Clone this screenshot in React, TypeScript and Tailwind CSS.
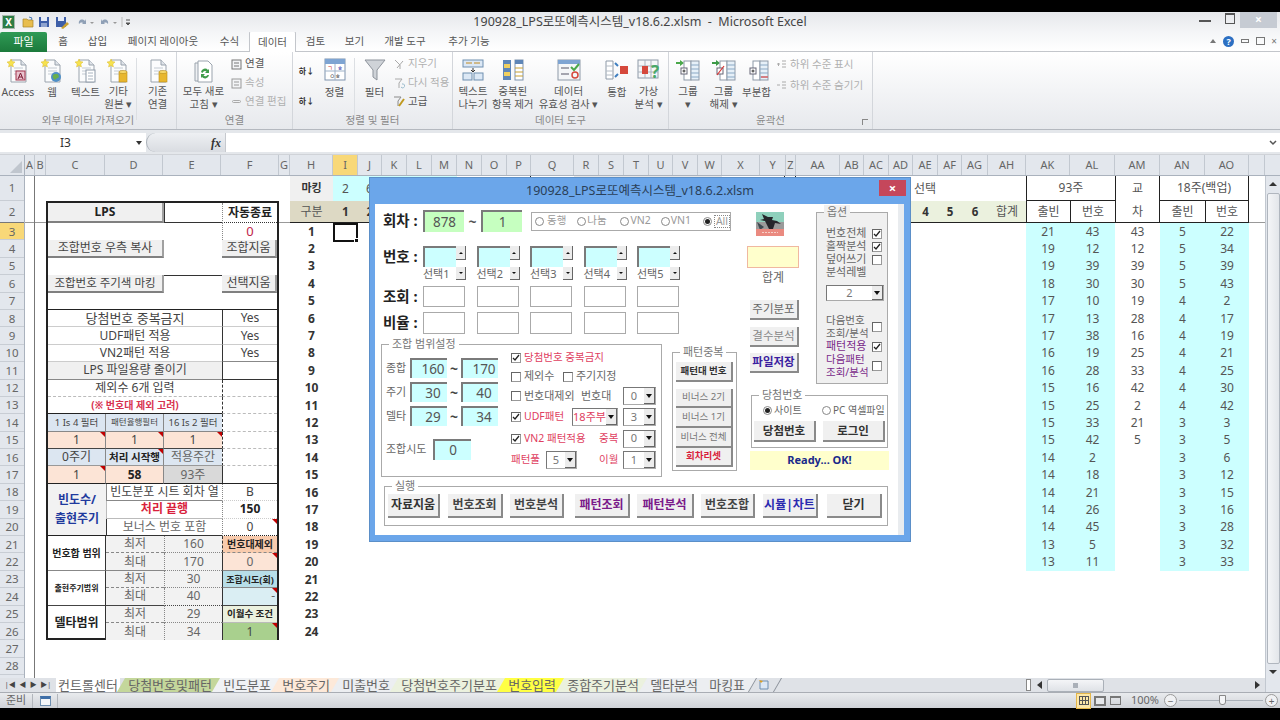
import React from 'react';

const sheetCols = 'grid-cols-[10px_11px_59px_58px_58px_58px_11px_43px_25px_24px_25px_25px_25px_25px_25px_24px_43px_25px_25px_25px_24px_25px_24px_38px_26px_10px_44px_24px_25px_24px_25px_24px_26px_38px_44px_45px_45px_45px_44px_16px]';
const colNames = ['A', 'B', 'C', 'D', 'E', 'F', 'G', 'H', 'I', 'J', 'K', 'L', 'M', 'N', 'O', 'P', 'Q', 'R', 'S', 'T', 'U', 'V', 'W', 'X', 'Y', 'Z', 'AA', 'AB', 'AC', 'AD', 'AE', 'AF', 'AG', 'AH', 'AK', 'AL', 'AM', 'AN', 'AO', ''];

const rightData: (string | number)[][] = [
  [21, 43, 43, 5, 22], [19, 12, 12, 5, 34], [19, 39, 39, 5, 39], [18, 30, 30, 5, 43], [17, 10, 19, 4, 2],
  [17, 13, 28, 4, 17], [17, 38, 16, 4, 19], [16, 19, 25, 4, 21], [16, 28, 33, 4, 25], [15, 16, 42, 4, 30],
  [15, 25, 2, 4, 42], [15, 33, 21, 3, 3], [15, 42, 5, 3, 5], [14, 2, '', 3, 6], [14, 18, '', 3, 12],
  [14, 21, '', 3, 15], [14, 26, '', 3, 16], [14, 45, '', 3, 28], [13, 5, '', 3, 32], [13, 11, '', 3, 33],
];

function Doc({ children, star = true }: { children?: React.ReactNode; star?: boolean }) {
  return (
    <svg width="24" height="26" viewBox="0 0 24 26">
      <path d="M5 2h10l5 5v17H5z" fill="#fbfcfd" stroke="#9aa3ad" />
      <path d="M15 2v5h5" fill="#dfe4ea" stroke="#9aa3ad" />
      <path d="M8 10h9M8 13h9M8 16h9" stroke="#c3cad2" />
      {star && <path d="M5 1l1.2 2.6L9 4 6.8 6l.6 3L5 7.5 2.600 9l.6-3L1 4l2.800-.4z" fill="#f6e24e" stroke="#d9b92c" strokeWidth=".5" />}
      {children}
    </svg>
  );
}

function Cylinder() {
  return (
    <g>
      <rect x="13" y="14" width="8" height="10" fill="#e8b72f" stroke="#b98c18" strokeWidth=".6" />
      <ellipse cx="17" cy="14" rx="4" ry="1.6" fill="#f5d76a" stroke="#b98c18" strokeWidth=".6" />
    </g>
  );
}

function SheetIcon({ kind }: { kind: 'group' | 'ungroup' | 'subtotal' }) {
  return (
    <svg width="26" height="24" viewBox="0 0 26 24">
      {kind !== 'subtotal' && <path d="M1 4h4V2l4 3-4 3V6H1z" fill={kind === 'group' ? '#4aa84a' : '#3d9a48'} />}
      <rect x="9" y="3" width="7" height="19" fill="#fff" stroke="#8e9aa8" />
      <rect x="16" y="3" width="8" height="19" fill="#e6f0f8" stroke="#8e9aa8" />
      <path d="M16 7h8M16 11h8M16 15h8M16 19h8" stroke="#8aa8c4" />
      <rect x="6" y="10" width="6" height="6" fill="#fff" stroke="#667" />
      {kind === 'ungroup' ? <path d="M6 17L13 8" stroke="#d33" strokeWidth="1.200" /> : <path d="M7.500 13h3M9 11.500v3" stroke="#333" />}
      {kind === 'subtotal' && <path d="M17 19h7" stroke="#d66" strokeWidth="1.500" />}
    </svg>
  );
}

function RibbonItem({ icon, lines, className = '' }: { icon: React.ReactNode; lines: string[]; className?: string }) {
  return (
    <div className={`flex flex-col items-center ${className}`}>
      <div className="h-[28px] flex items-start justify-center">{icon}</div>
      {lines.map((l, i) => (
        <div key={i} className="h-[13px] leading-[13px] text-[10.500px] text-[#555] whitespace-nowrap">{l}</div>
      ))}
    </div>
  );
}

function RibbonGroup({ label, className, children }: { label: string; className: string; children: React.ReactNode }) {
  return (
    <div className={`flex flex-col border-r border-[#d3d6db] ${className}`}>
      <div className="flex-1 flex pt-[6px] min-h-0">{children}</div>
      <div className="h-[18px] leading-[18px] text-center text-[10.500px] text-[#888]">{label}</div>
    </div>
  );
}

function SmallCmd({ icon, text, on = false, height = 'h-[19px]' }: { icon: React.ReactNode; text: string; on?: boolean; height?: string }) {
  return (
    <div className={`flex items-center gap-[3px] ${height} text-[10.500px] whitespace-nowrap ${on ? 'text-[#555]' : 'text-[#b0b0b0]'}`}>
      <span className="w-[12px] flex justify-center">{icon}</span>
      {text}
    </div>
  );
}

function Tiny({ color = '#999' }: { color?: string }) {
  return (
    <svg width="11" height="11" viewBox="0 0 11 11">
      <rect x="1" y="1" width="9" height="9" fill="#f3f4f6" stroke={color} />
      <path d="M3 4h5M3 7h5" stroke={color} />
    </svg>
  );
}

function Ribbon() {
  return (
    <div className="h-[78px] flex bg-gradient-to-b from-[#ffffff] to-[#e7e9ed] border-b border-[#b4b8bf]">
      <RibbonGroup label="외부 데이터 가져오기" className="w-[177px]">
        <RibbonItem className="w-[36px]" lines={['Access']} icon={<Doc><rect x="10" y="13" width="9" height="9" fill="#e9c4cf" stroke="#a3324c" /><path d="M12 21l2.500-6 2.500 6M13 19h3" stroke="#7d1a34" fill="none" /></Doc>} />
        <RibbonItem className="w-[33px]" lines={['웹']} icon={<Doc><circle cx="16" cy="19" r="5" fill="#4f8fc6" /><path d="M13 17c2-2 4 0 5-1l1 3c-2 2-3 1-4 3-1-1-3-2-2-5z" fill="#6ab04c" /></Doc>} />
        <RibbonItem className="w-[34px]" lines={['텍스트']} icon={<Doc><rect x="12" y="12" width="9" height="12" fill="#fff" stroke="#8e9aa8" /><path d="M14 15h5M14 18h5M14 21h5" stroke="#a9b4c0" /></Doc>} />
        <RibbonItem className="w-[32px]" lines={['기타', '원본 ▾']} icon={<Doc><Cylinder /></Doc>} />
        <div className="w-px h-[62px] bg-[#dcdfe3] mx-[2px]" />
        <RibbonItem className="w-[37px]" lines={['기존', '연결']} icon={<Doc star={false}><Cylinder /></Doc>} />
      </RibbonGroup>
      <RibbonGroup label="연결" className="w-[116px]">
        <RibbonItem className="w-[53px]" lines={['모두 새로', '고침 ▾']} icon={
          <svg width="24" height="26" viewBox="0 0 24 26">
            <path d="M3 5h10v18H3z" fill="#eef0f3" stroke="#9aa3ad" />
            <path d="M6 3h10l4 4v17H6z" fill="#fff" stroke="#9aa3ad" />
            <path d="M9 14a4 4 0 017-2l1-1v4h-4l1.500-1.500A2.500 2.500 0 0010.500 15zM17 17a4 4 0 01-7 2l-1 1v-4h4l-1.500 1.500a2.500 2.500 0 004-.500z" fill="#3f9c4a" />
          </svg>
        } />
        <div className="flex flex-col -mt-[3px]">
          <SmallCmd on text="연결" icon={<Tiny color="#777" />} />
          <SmallCmd text="속성" icon={<Tiny />} />
          <SmallCmd text="연결 편집" icon={<span className="w-[9px] h-[3px] border border-[#aaa] rounded-full" />} />
        </div>
      </RibbonGroup>
      <RibbonGroup label="정렬 및 필터" className="w-[160px]">
        <div className="w-[23px] ml-[2px] flex flex-col items-center text-[8px] leading-[10px] text-[#333] font-bold">
          <div className="mt-[8px] whitespace-nowrap">하↓</div>
          <div className="mt-[20px] whitespace-nowrap">하↓</div>
        </div>
        <RibbonItem className="w-[33px]" lines={['정렬']} icon={
          <svg width="22" height="24" viewBox="0 0 22 24">
            <rect x="1" y="1" width="20" height="21" fill="#fff" stroke="#7f93ad" />
            <rect x="1" y="1" width="20" height="5" fill="#7ea4d2" />
            <path d="M1 13h20M11 6v16" stroke="#9fb2c8" />
            <text x="6" y="12" fontSize="6" fill="#c33" textAnchor="middle">ㄱ</text>
            <text x="16" y="12" fontSize="6" fill="#33a" textAnchor="middle">ㅎ</text>
            <text x="11" y="20" fontSize="6" fill="#444" textAnchor="middle">ㅇㅎ</text>
          </svg>
        } />
        <div className="w-px h-[62px] bg-[#dcdfe3] mx-[3px]" />
        <RibbonItem className="w-[33px]" lines={['필터']} icon={
          <svg width="24" height="24" viewBox="0 0 24 24">
            <path d="M2 2h20l-8 10v10l-4-3v-7z" fill="#cfd3d8" stroke="#8d939b" />
          </svg>
        } />
        <div className="flex flex-col -mt-[3px] ml-[2px]">
          <SmallCmd text="지우기" icon={<svg width="11" height="11" viewBox="0 0 11 11"><path d="M1 1l5 5v4M9 2L3 9" stroke="#aaa" fill="none" /></svg>} />
          <SmallCmd text="다시 적용" icon={<svg width="11" height="11" viewBox="0 0 11 11"><path d="M1 1h7L5 5v5" stroke="#aaa" fill="none" /><path d="M8 6a2 2 0 11-1 3" stroke="#9bc" fill="none" /></svg>} />
          <SmallCmd on text="고급" icon={<svg width="12" height="11" viewBox="0 0 12 11"><path d="M1 1h7L5 5v5" stroke="#8a8a8a" fill="none" /><path d="M6 10l5-7" stroke="#c09a20" strokeWidth="2" /></svg>} />
        </div>
      </RibbonGroup>
      <RibbonGroup label="데이터 도구" className="w-[216px]">
        <RibbonItem className="w-[40px]" lines={['텍스트', '나누기']} icon={
          <svg width="24" height="24" viewBox="0 0 24 24">
            <rect x="2" y="2" width="20" height="7" fill="#dce8f5" stroke="#6f8fb0" />
            <path d="M5 5h6M13 5h6" stroke="#c08a20" />
            <path d="M12 10v4M10 12l2 2 2-2" stroke="#333" fill="none" />
            <rect x="2" y="15" width="9" height="7" fill="#dce8f5" stroke="#6f8fb0" />
            <rect x="13" y="15" width="9" height="7" fill="#dce8f5" stroke="#6f8fb0" />
          </svg>
        } />
        <RibbonItem className="w-[40px]" lines={['중복된', '항목 제거']} icon={
          <svg width="24" height="24" viewBox="0 0 24 24">
            <rect x="2" y="2" width="8" height="20" fill="#5e86b8" />
            <rect x="3" y="6" width="6" height="4" fill="#f0d060" />
            <rect x="3" y="14" width="6" height="4" fill="#f0d060" />
            <rect x="14" y="2" width="8" height="20" fill="#fff" stroke="#7f93ad" />
            <rect x="14" y="2" width="8" height="4" fill="#5e86b8" />
            <path d="M14 10h8M14 14h8M14 18h8" stroke="#c9a030" />
          </svg>
        } />
        <RibbonItem className="w-[72px]" lines={['데이터', '유효성 검사 ▾']} icon={
          <svg width="26" height="24" viewBox="0 0 26 24">
            <rect x="2" y="2" width="22" height="20" fill="#f4f6f8" stroke="#8e9aa8" />
            <rect x="2" y="2" width="22" height="4" fill="#7ea4d2" />
            <path d="M5 10h8M5 16h8" stroke="#556" />
            <path d="M15 9l3 3 5-6" stroke="#4aa84a" strokeWidth="2" fill="none" />
            <circle cx="19" cy="17" r="3" fill="none" stroke="#d5483c" strokeWidth="1.500" />
          </svg>
        } />
        <RibbonItem className="w-[25px]" lines={['통합']} icon={
          <svg width="24" height="24" viewBox="0 0 24 24">
            <path d="M1 3h7v18H1z" fill="#fff" stroke="#8e9aa8" />
            <path d="M1 8h7M1 13h7M1 17h7" stroke="#b4bcc6" />
            <rect x="15" y="8" width="8" height="8" fill="#d5483c" />
            <path d="M10 5l3 3M10 19l3-3" stroke="#3f7fc0" strokeWidth="2" />
          </svg>
        } />
        <RibbonItem className="w-[39px]" lines={['가상', '분석 ▾']} icon={
          <svg width="24" height="24" viewBox="0 0 24 24">
            <rect x="1" y="2" width="20" height="18" fill="#f4f6f8" stroke="#8e9aa8" />
            <path d="M1 8h20M1 14h20M8 2v18M14 2v18" stroke="#a9b2bd" />
            <rect x="5" y="8" width="6" height="8" fill="#d5483c" />
            <text x="18" y="20" fontSize="17" fontWeight="700" fill="#48a868" textAnchor="middle">?</text>
          </svg>
        } />
      </RibbonGroup>
      <RibbonGroup label="윤곽선" className="w-[204px] relative">
        <RibbonItem className="w-[38px]" lines={['그룹', '▾']} icon={<SheetIcon kind="group" />} />
        <RibbonItem className="w-[33px]" lines={['그룹', '해제 ▾']} icon={<SheetIcon kind="ungroup" />} />
        <RibbonItem className="w-[33px]" lines={['부분합']} icon={<SheetIcon kind="subtotal" />} />
        <div className="flex flex-col -mt-[4px] ml-[2px]">
          <SmallCmd height="h-[21px]" text="하위 수준 표시" icon={<svg width="11" height="9" viewBox="0 0 11 9"><path d="M1 4h3M2.500 3v3" stroke="#aaa" /><path d="M6 1h4M6 4h4M6 7h4" stroke="#aaa" /></svg>} />
          <SmallCmd height="h-[21px]" text="하위 수준 숨기기" icon={<svg width="11" height="9" viewBox="0 0 11 9"><path d="M1 4h3" stroke="#aaa" /><path d="M6 1h4M6 4h4M6 7h4" stroke="#aaa" /></svg>} />
        </div>
        <span className="absolute right-[4px] bottom-[4px] w-[6px] h-[6px] border-l border-t border-[#888]" />
      </RibbonGroup>
      <div className="flex-1" />
    </div>
  );
}

function TitleBar() {
  return (
    <div className="h-[20px] relative flex items-center pl-[2px] bg-gradient-to-b from-[#e6e8eb] to-[#f4f5f7]">
      <div className="w-[13px] h-[14px] bg-[#2d7d46] border border-[#a9b8ae] flex items-center justify-center text-white text-[10px] font-bold leading-none">X</div>
      <svg className="ml-[6px]" width="110" height="14" viewBox="0 0 110 14">
        <path d="M2 4h4l1 1h5v7H2z" fill="#e8bd4e" stroke="#a8842a" strokeWidth=".7" />
        <path d="M8 2l3 1-1 2" stroke="#4a7ab8" fill="none" />
        <rect x="18" y="2" width="10" height="10" fill="#3e5fa8" /><rect x="20" y="2" width="6" height="4" fill="#e6ecf7" /><rect x="20" y="8" width="6" height="4" fill="#8fa4cf" />
        <rect x="35" y="2" width="10" height="10" fill="#3e5fa8" /><rect x="37" y="2" width="6" height="4" fill="#e6ecf7" /><path d="M40 13l6-6 2 2-6 5z" fill="#c9a030" />
        <path d="M58 9c-1-4 3-6 6-3l1-2v5h-4l1-1c-2-1-3 0-4 1z" fill="#8fa0b6" /><path d="M69 7h4l-2 2z" fill="#999" />
        <path d="M87 9c1-4-3-6-6-3l-1-2v5h4l-1-1c2-1 3 0 4 1z" fill="#8fa0b6" /><path d="M92 7h4l-2 2z" fill="#999" />
        <path d="M101 2v10" stroke="#bbb" /><path d="M105 8h4l-2 2zM105 5h4" stroke="#555" fill="#555" />
      </svg>
      <div className="absolute left-0 right-0 text-center text-[12.500px] text-[#444] pointer-events-none">190928_LPS로또예측시스템_v18.6.2.xlsm&nbsp; -&nbsp; Microsoft Excel</div>
      <div className="ml-auto flex items-start h-full">
        <div className="w-[12px] mr-[14px] border-b-2 border-[#555] h-[10px]" />
        <div className="w-[10px] h-[11px] mr-[5px] border border-[#555] border-t-2 mt-[1px]" />
        <div className="w-[37px] h-[16px] ml-[0px] mr-[3px] bg-[#c6cbd3] text-white text-center text-[12px] font-bold leading-[15px]">×</div>
      </div>
    </div>
  );
}

function TabStrip() {
  const tabs: [string, string][] = [['홈', 'w-[32px]'], ['삽입', 'w-[37px]'], ['페이지 레이아웃', 'w-[94px]'], ['수식', 'w-[39px]']];
  const tabs2: [string, string][] = [['검토', 'w-[39px]'], ['보기', 'w-[39px]'], ['개발 도구', 'w-[62px]'], ['추가 기능', 'w-[66px]']];
  return (
    <div className="h-[20px] flex items-end bg-gradient-to-b from-[#f4f5f7] to-[#ffffff] border-b border-[#c3c6cb]">
      <div className="w-[47px] h-[20px] mb-[-1px] bg-gradient-to-b from-[#2f9a55] to-[#1c7a3c] rounded-t-[2px] text-white text-[11px] leading-[20px] text-center">파일</div>
      {tabs.map(([t, w]) => (
        <div key={t} className={`${w} h-[20px] leading-[20px] text-center text-[10.500px] text-[#555]`}>{t}</div>
      ))}
      <div className="w-[47px] h-[21px] mb-[-1px] bg-white border border-b-0 border-[#c3c6cb] rounded-t-[2px] leading-[20px] text-center text-[10.500px] text-[#555]">데이터</div>
      {tabs2.map(([t, w]) => (
        <div key={t} className={`${w} h-[20px] leading-[20px] text-center text-[10.500px] text-[#555]`}>{t}</div>
      ))}
      <div className="ml-auto flex items-center gap-[5px] h-[20px] pr-[3px]">
        <span className="w-0 h-0 border-x-[3px] border-x-transparent border-b-[4px] border-b-[#777] mr-[2px]" />
        <span className="w-[11px] h-[11px] rounded-full bg-[#2c6fc2] text-white text-[9px] leading-[11px] text-center font-bold">?</span>
        <span className="w-[8px] h-[4px] border border-[#777] ml-[2px]" />
        <span className="w-[9px] h-[8px] border border-[#777] ml-[2px]" />
        <span className="text-[10px] text-[#777] leading-none ml-[1px]">×</span>
      </div>
    </div>
  );
}

function FormulaBar() {
  return (
    <div className="h-[25px] flex pt-[3px] pb-[2px] bg-[#e4e7eb] border-b border-[#d0d3d8]">
      <div className="w-[146px] bg-white flex items-center relative text-[12px] text-[#333]">
        <span className="ml-[60px]">I3</span>
        <span className="absolute right-[4px] w-0 h-0 border-x-[3px] border-x-transparent border-t-[4px] border-t-[#333]" />
      </div>
      <div className="w-[79px] flex items-center pl-[2px] rounded-l-[10px] bg-gradient-to-b from-[#eef0f3] to-[#d9dce1] border-l border-[#aab0b8]">
        <span className="ml-auto mr-[4px] text-[12px] italic font-bold text-[#333] font-['Liberation_Serif',serif]">fx</span>
      </div>
      <div className="flex-1 bg-white border-l border-[#c6c9ce] flex justify-end items-center pr-[3px]">
        <svg width="8" height="6" viewBox="0 0 8 6"><path d="M1 1l3 3 3-3" stroke="#555" strokeWidth="1.500" fill="none" /></svg>
      </div>
    </div>
  );
}

function ColHeader() {
  return (
    <div className="h-[21px] flex bg-[#e3e7ed] border-b border-[#aab2bd]">
      <div className="w-[25px] relative border-r border-[#aab2bd] overflow-hidden">
        <span className="absolute right-[2px] bottom-[2px] w-0 h-0 border-l-[12px] border-l-transparent border-b-[12px] border-b-[#c0c6ce]" />
      </div>
      <div className={`grid ${sheetCols} flex-1`}>
        {colNames.map((c, i) => (
          <div key={i} className={`flex items-center justify-center border-r border-[#c2c8d0] text-[11px] text-[#666] ${c === 'I' ? 'bg-[#f8d878]' : ''}`}>{c}</div>
        ))}
      </div>
    </div>
  );
}

function RowHeaders() {
  const rows = Array.from({ length: 28 }, (_, i) => i + 1);
  return (
    <div className="w-[25px] flex flex-col bg-[#e3e7ed] border-r border-[#aab2bd]">
      {rows.map((r) => (
        <div
          key={r}
          className={`flex items-center justify-center text-[11.5px] text-[#666] border-b border-[#c8cdd4] ${r === 1 ? 'h-[25px]' : r === 2 ? 'h-[22px] border-b-[#777]' : 'h-[17.4px]'} ${r === 3 ? 'bg-[#f8d878]' : ''}`}
        >
          {r}
        </div>
      ))}
      <div className="flex-1" />
    </div>
  );
}

function Tri() {
  return <span className="absolute right-0 top-0 w-0 h-0 border-l-[5px] border-l-transparent border-t-[5px] border-t-[#c00000]" />;
}

const cell = 'relative flex items-center justify-center whitespace-nowrap overflow-hidden leading-none';
const btnCell = 'bg-[#f0f0f0] border-b-2 border-r-2 border-b-[#808080] border-r-[#a0a0a0]';

function LeftTable() {
  return (
    <div className="mt-[25px] w-[233px] h-[439px] border-2 border-[#222] bg-white text-[12px] text-[#444] grid grid-cols-[58px_58px_58px_55px] grid-rows-[20px_repeat(24,17.4px)]">
      {/* row 2 */}
      <div className={`${cell} ${btnCell} col-span-2 font-bold text-[#222]`}>LPS</div>
      <div className={`${cell} border-l border-[#333] border-b border-b-[#333]`} />
      <div className={`${cell} font-bold text-[#222] border-l border-dotted border-[#888] border-b border-b-[#333]`}>자동종료</div>
      {/* row 3-7 */}
      <div className={`${cell} col-span-3`} />
      <div className={`${cell} border-l border-dotted border-[#888] text-[#c0254a] text-[13px]`}>0</div>
      <div className={`${cell} ${btnCell} col-span-2`}>조합번호 우측 복사</div>
      <div className={`${cell}`} />
      <div className={`${cell} ${btnCell}`}>조합지움</div>
      <div className={`${cell} col-span-4`} />
      <div className={`${cell} ${btnCell} col-span-2 text-[11.500px]`}>조합번호 주기색 마킹</div>
      <div className={`${cell} border-t border-[#333]`} />
      <div className={`${cell} ${btnCell}`}>선택지움</div>
      <div className={`${cell} col-span-4 border-b border-[#222]`} />
      {/* row 8-10 */}
      <div className={`${cell} col-span-3 text-[13px] border-b border-[#ccc]`}>당첨번호 중복금지</div>
      <div className={`${cell} border-l border-[#333] border-b border-b-[#ccc]`}>Yes</div>
      <div className={`${cell} col-span-3 border-b border-[#ccc]`}>UDF패턴 적용</div>
      <div className={`${cell} border-l border-[#333] border-b border-b-[#ccc]`}>Yes</div>
      <div className={`${cell} col-span-3 border-b border-[#ccc]`}>VN2패턴 적용</div>
      <div className={`${cell} border-l border-[#333] border-b border-b-[#888]`}>Yes</div>
      {/* row 11-13 */}
      <div className={`${cell} col-span-3 bg-[#f0f0f0] border-b border-[#888]`}>LPS 파일용량 줄이기</div>
      <div className={`${cell} border-l border-[#333] border-b border-b-[#333]`} />
      <div className={`${cell} col-span-3 border-b border-dashed border-[#bbb]`}>제외수 6개 입력</div>
      <div className={`${cell} border-l border-[#333] border-b border-dashed border-b-[#bbb]`} />
      <div className={`${cell} col-span-3 font-bold text-[#d8324f] text-[10px] border-b border-[#222]`}>(※ 번호대 제외 고려)</div>
      <div className={`${cell} border-l border-[#333] border-b border-dashed border-b-[#bbb]`} />
      {/* row 14-17 */}
      <div className={`${cell} bg-[#dce6f1] text-[9.500px] border-b border-r border-[#888]`}>1 Is 4 필터</div>
      <div className={`${cell} bg-[#dce6f1] text-[8.500px] border-b border-r border-[#888]`}>패턴율행필터</div>
      <div className={`${cell} bg-[#dce6f1] text-[9.500px] border-b border-[#888]`}>16 Is 2 필터</div>
      <div className={`${cell} border-l border-[#333] border-b border-dashed border-b-[#bbb]`} />
      <div className={`${cell} bg-[#fce4d6] border-r border-[#888] border-b border-b-[#444]`}>1<Tri /></div>
      <div className={`${cell} bg-[#fce4d6] border-r border-[#888] border-b border-b-[#444]`}>1<Tri /></div>
      <div className={`${cell} bg-[#fce4d6] border-b border-[#444]`}>1<Tri /></div>
      <div className={`${cell} border-l border-[#333] border-b border-dashed border-b-[#bbb]`} />
      <div className={`${cell} bg-[#dce6f1] border-r border-[#888] border-b border-b-[#999]`}>0주기</div>
      <div className={`${cell} bg-[#dce6f1] font-bold text-[10.500px] text-[#222] border-r border-[#888] border-b border-b-[#999]`}>처리 시작행<Tri /></div>
      <div className={`${cell} bg-[#dce6f1] text-[#666] border-b border-[#999]`}>적용주간</div>
      <div className={`${cell} border-l border-[#333] border-b border-dashed border-b-[#bbb]`} />
      <div className={`${cell} bg-[#fce4d6] border-r border-[#888] border-b border-b-[#222]`}>1<Tri /></div>
      <div className={`${cell} bg-[#fce4d6] font-bold text-[#222] border-r border-[#888] border-b border-b-[#222]`}>58</div>
      <div className={`${cell} bg-[#d9d9d9] text-[#666] border-b border-[#222]`}>93주</div>
      <div className={`${cell} border-l border-[#333] border-b border-b-[#222]`} />
      {/* row 18-20 */}
      <div className={`${cell} row-span-3 flex-col bg-[#f2f2f2] font-bold text-[#1f3a9e] border-b border-[#222]`}>
        <div className="leading-[19px]">빈도수/</div>
        <div className="leading-[19px]">출현주기</div>
      </div>
      <div className={`${cell} col-span-2 border-l border-[#333] border-b border-[#888]`}>빈도분포 시트 회차 열</div>
      <div className={`${cell} border-l border-dotted border-[#888] border-b border-b-[#ccc]`}>B</div>
      <div className={`${cell} col-span-2 border-l border-[#333] border-b border-[#bbb] font-bold text-[#d81f3c]`}>처리 끝행</div>
      <div className={`${cell} border-l border-dotted border-[#888] border-b border-b-[#ccc] font-bold text-[#222]`}>150</div>
      <div className={`${cell} col-span-2 border-l border-[#333] border-b border-[#222] text-[#666]`}>보너스 번호 포함</div>
      <div className={`${cell} border-l border-dotted border-[#888] border-b border-b-[#222]`}>0<Tri /></div>
      {/* row 21-22 */}
      <div className={`${cell} row-span-2 font-bold text-[10px] text-[#222] border-r border-[#333] border-b border-b-[#888]`}>번호합 범위</div>
      <div className={`${cell} bg-[#f2f2f2] text-[#666] border-b border-dashed border-b-[#888]`}>최저</div>
      <div className={`${cell} bg-[#f2f2f2] text-[#666] border-l border-dotted border-l-[#888] border-b border-dashed border-b-[#888]`}>160</div>
      <div className={`${cell} bg-[#f8cbad] font-bold text-[10px] text-[#222] border-l border-[#333] border-b border-dashed border-b-[#888]`}>번호대제외</div>
      <div className={`${cell} bg-[#f2f2f2] text-[#666] border-b border-[#888]`}>최대</div>
      <div className={`${cell} bg-[#f2f2f2] text-[#666] border-l border-dotted border-l-[#888] border-b border-[#888]`}>170</div>
      <div className={`${cell} bg-[#fce4d6] text-[#666] border-l border-[#333] border-b border-b-[#888]`}>0<Tri /></div>
      {/* row 23-24 */}
      <div className={`${cell} row-span-2 font-bold text-[8px] text-[#222] border-r border-[#333] border-b border-b-[#444]`}>출현주기범위</div>
      <div className={`${cell} bg-[#f2f2f2] text-[#666] border-b border-dashed border-b-[#888]`}>최저</div>
      <div className={`${cell} bg-[#f2f2f2] text-[#666] border-l border-dotted border-l-[#888] border-b border-dashed border-b-[#888]`}>30</div>
      <div className={`${cell} bg-[#b7dee8] font-bold text-[9px] text-[#222] border-l border-[#333] border-b border-b-[#888]`}>조합시도(회)</div>
      <div className={`${cell} bg-[#f2f2f2] text-[#666] border-b border-[#444]`}>최대</div>
      <div className={`${cell} bg-[#f2f2f2] text-[#666] border-l border-dotted border-l-[#888] border-b border-[#444]`}>40</div>
      <div className={`${cell} bg-[#daeef3] text-[#666] justify-end pr-[2px] border-l border-[#333] border-b border-b-[#444]`}>-<Tri /></div>
      {/* row 25-26 */}
      <div className={`${cell} row-span-2 font-bold text-[#222] border-r border-[#333]`}>델타범위</div>
      <div className={`${cell} bg-[#f2f2f2] text-[#666] border-b border-dashed border-b-[#888]`}>최저</div>
      <div className={`${cell} bg-[#f2f2f2] text-[#666] border-l border-dotted border-l-[#888] border-b border-dashed border-b-[#888]`}>29</div>
      <div className={`${cell} bg-[#ebf1de] font-bold text-[9.500px] text-[#222] border-l border-[#333] border-b border-b-[#bbb]`}>이월수 조건</div>
      <div className={`${cell} bg-[#f2f2f2] text-[#666]`}>최대</div>
      <div className={`${cell} bg-[#f2f2f2] text-[#666] border-l border-dotted border-l-[#888]`}>34</div>
      <div className={`${cell} bg-[#a9d08e] border-l border-[#333]`}>1<Tri /></div>
    </div>
  );
}

function RightBlock() {
  const nums = Array.from({ length: 24 }, (_, i) => i + 1);
  return (
    <div className="flex-1 flex flex-col">
      {/* row 1 */}
      <div className="h-[25px] flex text-[12px] text-[#555]">
        <div className="w-[43px] bg-[#f0f0f0] font-bold text-[11px] text-[#333] flex items-center justify-center">마킹</div>
        <div className="w-[25px] bg-[#ccffff] flex items-center justify-center">2</div>
        <div className="w-[99px] bg-[#ccffff] pl-[8px] flex items-center">6</div>
        <div className="w-[74px] border-r border-[#222]" />
        <div className="w-[43px]" />
        <div className="w-[148px] bg-[#e8e8e8]" />
        <div className="w-[63px] border-r border-[#222]" />
        <div className="w-[11px] border-r border-[#222]" />
        <div className="w-[117px]" />
        <div className="w-[113px] flex items-center pl-[1px]">선택</div>
        <div className="w-[89px] border-l border-[#222] flex items-center justify-center border-b border-b-[#222]">93주</div>
        <div className="w-[45px] border-x border-[#222] flex items-center justify-center">교</div>
        <div className="w-[89px] border-r border-b border-[#222] flex items-center justify-center">18주(백업)</div>
      </div>
      {/* row 2 */}
      <div className="h-[22px] flex text-[12px] text-[#555]">
        <div className="w-[43px] bg-[#ddd9c4] border-b border-[#222] flex items-center justify-center">구분</div>
        <div className="w-[25px] bg-[#ddd9c4] border-b border-[#222] font-bold text-[#333] flex items-center justify-center">1</div>
        <div className="w-[24px] bg-[#ddd9c4] border-b border-[#222] font-bold text-[#333] flex items-center justify-center">2</div>
        <div className="w-[531px] bg-[#ebf1de] border-b border-[#222]" />
        <div className="w-[113px] bg-[#ebf1de] border-b border-[#222] font-bold text-[#333] grid grid-cols-[25px_24px_26px_38px] items-center text-center text-[11.500px]">
          <span>4</span>
          <span>5</span>
          <span>6</span>
          <span className="font-normal text-[12px] text-[#555] whitespace-nowrap">합계</span>
        </div>
        <div className="w-[44px] border-l border-b border-[#222] flex items-center justify-center">출빈</div>
        <div className="w-[45px] border-l border-b border-[#222] flex items-center justify-center">번호</div>
        <div className="w-[45px] border-x border-b border-[#222] flex items-center justify-center">차</div>
        <div className="w-[45px] border-b border-[#222] flex items-center justify-center">출빈</div>
        <div className="w-[44px] border-x border-b border-[#222] flex items-center justify-center">번호</div>
        <div className="flex-1 border-b border-[#999]" />
      </div>
      {/* data */}
      <div className="flex">
        <div className="w-[43px] flex flex-col">
          {nums.map((n) => (
            <div key={n} className="h-[17.4px] flex items-center justify-center text-[12px] font-bold text-[#333]">{n}</div>
          ))}
        </div>
        <div className="w-[25px]">
          <div className="h-[19px] border-2 border-[#111] relative">
            <span className="absolute -right-[3px] -bottom-[3px] w-[5px] h-[5px] bg-[#111] border border-white" />
          </div>
        </div>
        <div className="w-[668px]" />
        <div className="grid grid-cols-[44px_45px_45px_45px_44px] auto-rows-[17.4px] text-[12px] text-[#555] self-start">
          {rightData.map((r, i) =>
            r.map((v, j) => (
              <div key={`${i}-${j}`} className={`flex items-center justify-center ${j === 2 ? '' : 'bg-[#ccffff]'}`}>{v}</div>
            )),
          )}
        </div>
      </div>
    </div>
  );
}

function Sheet() {
  return (
    <div className="flex-1 min-h-0 flex bg-white">
      <RowHeaders />
      <div className="w-[10px] border-r border-[#777]">
        <div className="h-[47px] border-b border-[#999]" />
      </div>
      <div className="w-[11px]">
        <div className="h-[47px] border-b border-[#999]" />
      </div>
      <LeftTable />
      <div className="w-[11px]">
        <div className="h-[47px] border-b border-[#999]" />
      </div>
      <RightBlock />
    </div>
  );
}

function SheetTab({ label, tone }: { label: string; tone: string }) {
  return (
    <div className={`h-[14px] flex items-center ml-[-4px] border-r border-[#8a9099] [transform:skewX(-30deg)] ${tone}`}>
      <span className="[transform:skewX(30deg)] px-[7.200px] text-[13px] leading-[14px] text-[#666] whitespace-nowrap">{label}</span>
    </div>
  );
}

function TabBar() {
  return (
    <div className="h-[14px] flex items-center bg-[#dfe2e7]">
      <div className="w-[56px] flex items-center justify-around px-[3px] text-[7px] text-[#444]">
        <span>|◀</span><span>◀</span><span>▶</span><span>▶|</span>
      </div>
      <div className="h-[14px] w-[64px] bg-white flex items-center justify-center text-[13px] leading-[14px] text-[#666] whitespace-nowrap">컨트롤센터</div>
      <div className="pl-[5px] flex">
        <SheetTab label="당첨번호및패턴" tone="bg-[#c4d79b]" />
        <SheetTab label="빈도분포" tone="bg-[#f0f2f5]" />
        <SheetTab label="번호주기" tone="bg-[#fde9d9]" />
        <SheetTab label="미출번호" tone="bg-[#eceef1]" />
        <SheetTab label="당첨번호주기분포" tone="bg-[#ebf1de]" />
        <SheetTab label="번호입력" tone="bg-[#ffff44]" />
        <SheetTab label="종합주기분석" tone="bg-[#ebf1de]" />
        <SheetTab label="델타분석" tone="bg-[#eceef1]" />
        <SheetTab label="마킹표" tone="bg-[#eceef1]" />
        <div className="w-[28px] h-[14px] flex items-center justify-center ml-[-4px] border-r border-[#8a9099] [transform:skewX(-30deg)]">
          <svg className="[transform:skewX(30deg)]" width="12" height="12" viewBox="0 0 12 12"><path d="M2 2h8v8H2z" fill="#dce8f5" stroke="#6f8fb0" /><path d="M1 1l4 1-2 2z" fill="#e0a020" /></svg>
        </div>
      </div>
      <div className="flex-1" />
      <div className="w-[5px] h-[12px] bg-white border border-[#888] mr-[6px]" />
      <span className="w-0 h-0 border-y-[4px] border-y-transparent border-r-[5px] border-r-[#333] mr-[5px]" />
      <div className="w-[57px] h-[13px] bg-gradient-to-b from-[#f4f5f7] to-[#dfe2e7] border border-[#aab0b8] rounded-[2px] flex items-center justify-center">
        <span className="w-[5px] h-[5px] bg-[#aab0b8]" />
      </div>
      <div className="w-[161px] flex justify-end pr-[5px]">
        <span className="w-0 h-0 border-y-[4px] border-y-transparent border-l-[5px] border-l-[#333]" />
      </div>
    </div>
  );
}

function VScroll() {
  return (
    <div className="w-[15px] flex flex-col items-center bg-[#e3e7ed] border-l border-[#c2c8d0]">
      <div className="h-[16px] flex items-center justify-center">
        <span className="w-0 h-0 border-x-[4px] border-x-transparent border-b-[4px] border-b-[#333]" />
      </div>
      <div className="w-[13px] h-[472px] mt-[1px] bg-gradient-to-r from-[#f4f5f7] to-[#e3e6ea] border border-[#b0b6be] rounded-[2px]" />
      <div className="flex-1" />
      <div className="h-[28px] flex items-start justify-center pt-[6px]">
        <span className="w-0 h-0 border-x-[4px] border-x-transparent border-t-[4px] border-t-[#333]" />
      </div>
    </div>
  );
}

function StatusBar() {
  return (
    <div className="h-[16px] flex items-center bg-gradient-to-b from-[#e9ebee] to-[#cfd2d7] border-t border-[#a9adb4] text-[11px] text-[#666]">
      <span className="ml-[6px] w-[26px]">준비</span>
      <span className="w-px h-[14px] bg-[#b2b6bc]" />
      <span className="ml-[7px] w-[11px] h-[10px] bg-[#f4f6f8] border border-[#6f8fb0] border-t-[3px] border-t-[#3f6fa8]" />
      <span className="ml-[6px] w-px h-[14px] bg-[#b2b6bc]" />
      <div className="flex-1" />
      <span className="w-[15px] h-[16px] bg-[#fde7a8] border border-[#e4b64a] flex items-center justify-center">
        <svg width="10" height="9" viewBox="0 0 10 9"><path d="M0 .5h10M0 4.500h10M0 8.500h10M.5 0v9M3.500 0v9M6.500 0v9M9.500 0v9" stroke="#555" /></svg>
      </span>
      <span className="ml-[3px] w-[12px] h-[10px] border-2 border-[#777] bg-[#e6e8eb]" />
      <span className="ml-[4px] w-[11px] h-[9px] border border-[#777] border-t-2" />
      <span className="ml-[6px] w-[36px] text-center">100%</span>
      <span className="ml-[1px] w-[13px] h-[13px] rounded-full border border-[#999] bg-[#f0f1f3] flex items-center justify-center text-[10px] leading-none">−</span>
      <div className="w-[84px] h-px bg-[#aab0b8] mx-[2px] relative">
        <span className="absolute left-[40px] -top-[5px] w-[7px] h-[10px] bg-[#f4f5f7] border border-[#888] rounded-b-[3px]" />
      </div>
      <span className="mr-[2px] w-[13px] h-[13px] rounded-full border border-[#999] bg-[#f0f1f3] flex items-center justify-center text-[10px] leading-none">+</span>
    </div>
  );
}

/* ---------- dialog ---------- */

function Check({ on = false }: { on?: boolean }) {
  return (
    <span className="w-[10px] h-[10px] shrink-0 bg-white border border-[#999] border-t-[#666] border-l-[#666] flex items-center justify-center">
      {on && <svg width="8" height="8" viewBox="0 0 8 8"><path d="M1 4l2 2 4-5" stroke="#222" strokeWidth="1.300" fill="none" /></svg>}
    </span>
  );
}

function Radio({ on = false }: { on?: boolean }) {
  return (
    <span className="w-[9px] h-[9px] shrink-0 rounded-full bg-white border border-[#888] flex items-center justify-center">
      {on && <span className="w-[5px] h-[5px] rounded-full bg-[#222]" />}
    </span>
  );
}

function Btn({ children, className = '', size = 'text-[11.500px]' }: { children: React.ReactNode; className?: string; size?: string }) {
  return (
    <div className={`flex items-center justify-center bg-[#f0f0f0] border-b-2 border-r-2 border-b-[#8a8a8a] border-r-[#8a8a8a] whitespace-nowrap overflow-hidden ${size} ${className}`}>
      {children}
    </div>
  );
}

function Sunken({ value, className = '' }: { value?: string; className?: string }) {
  return (
    <div className={`flex items-center justify-center border-t-2 border-l-2 border-t-[#7a7a7a] border-l-[#7a7a7a] text-[13.5px] text-[#555] ${className}`}>{value}</div>
  );
}

function Combo({ value, className = '', text = 'text-[#777]', height = 'h-[18px]' }: { value: string; className?: string; text?: string; height?: string }) {
  return (
    <div className={`${height} flex items-center bg-white border border-[#aaa] border-t-[#777] border-l-[#777] text-[11px] ${text} ${className}`}>
      <span className="flex-1 text-center overflow-hidden whitespace-nowrap">{value}</span>
      <span className="w-[11px] h-full flex items-center justify-center bg-[#ececec] border-b border-r border-[#666]">
        <span className="w-0 h-0 border-x-[3px] border-x-transparent border-t-[4px] border-t-[#111]" />
      </span>
    </div>
  );
}

function Group({ label, className = '', legendBg = 'bg-white', children }: { label: string; className?: string; legendBg?: string; children: React.ReactNode }) {
  return (
    <div className={`relative border border-[#aaa] ${className}`}>
      <span className={`absolute -top-[8px] left-[7px] px-[3px] ${legendBg} text-[11px] leading-[14px] text-[#777] whitespace-nowrap`}>{label}</span>
      {children}
    </div>
  );
}

function Spin({ label }: { label: string }) {
  return (
    <div className="flex w-[43px] h-[34px]">
      <div className="w-[33px]">
        <Sunken className="h-[21px] bg-[#ccffff]" />
        <div className="h-[13px] leading-[13px] text-[11px] text-[#666] whitespace-nowrap">{label}</div>
      </div>
      <div className="w-[10px] flex flex-col justify-between">
        <span className="h-[14px] bg-[#ececec] border-b border-r border-[#666] flex items-center justify-center">
          <span className="w-0 h-0 border-x-[2px] border-x-transparent border-b-[2px] border-b-[#111]" />
        </span>
        <span className="h-[13px] bg-[#ececec] border-b border-r border-[#666] flex items-center justify-center">
          <span className="w-0 h-0 border-x-[2px] border-x-transparent border-t-[2px] border-t-[#111]" />
        </span>
      </div>
    </div>
  );
}

function EmptyBox() {
  return <div className="w-[42px] h-full bg-white border border-[#aaa]" />;
}

function RangeRow({ label, from, to, className = '' }: { label: string; from: string; to: string; className?: string }) {
  return (
    <div className={`flex items-center h-[20px] ${className}`}>
      <span className="w-[24px] text-[11px] text-[#666]">{label}</span>
      <Sunken value={from} className="w-[37px] h-full bg-[#ccffff] pl-[7px]" />
      <span className="w-[14px] text-center text-[14px] text-[#444] font-bold">~</span>
      <Sunken value={to} className="w-[37px] h-full bg-[#ccffff] pl-[7px]" />
    </div>
  );
}

function Dialog() {
  const red = 'text-[#e0405f] text-[10.500px]';
  return (
    <div className="absolute left-[370px] top-[178px] w-[540px] h-[363px] flex flex-col bg-[#6ba6ea] shadow-[0_0_0_1px_#5b8fc8]">
      <div className="h-[26px] relative flex items-center justify-center">
        <span className="text-[12.500px] text-[#2a4058]">190928_LPS로또예측시스템_v18.6.2.xlsm</span>
        <span className="absolute right-[4px] top-[2px] w-[27px] h-[16px] bg-[#c5475b] flex items-center justify-center text-white text-[13px] font-bold leading-none">×</span>
      </div>
      <div className="flex-1 mx-[5px] mb-[6px] flex">
        <div className="w-[523px] bg-white flex flex-col text-[#333]">
          <div className="flex">
            {/* left side */}
            <div className="w-[372px]">
              <div className="flex items-center ml-[8px] mt-[6px] h-[22px]">
                <span className="w-[40px] font-bold text-[14.500px] text-[#222] whitespace-nowrap">회차 :</span>
                <Sunken value="878" className="w-[41px] h-full bg-[#c6ffc0]" />
                <span className="w-[17px] text-center font-bold text-[14px] text-[#555]">~</span>
                <Sunken value="1" className="w-[41px] h-full bg-[#c6ffc0]" />
                <div className="ml-[9px] w-[200px] h-[19px] border border-[#aaa] flex items-center text-[10.500px] text-[#999] pl-[3px]">
                  <Radio /><span className="ml-[3px] w-[31px]">동행</span>
                  <Radio /><span className="ml-[1px] w-[34px]">나눔</span>
                  <Radio /><span className="ml-[1px] w-[31px]">VN2</span>
                  <Radio /><span className="ml-[1px] w-[33px]">VN1</span>
                  <Radio on /><span className="ml-[2px] px-[1px] border border-dotted border-[#888] leading-[11px]">All</span>
                </div>
              </div>
              <div className="flex ml-[8px] mt-[14px]">
                <span className="w-[40px] font-bold text-[14.500px] text-[#222] leading-[20px] whitespace-nowrap">번호 :</span>
                <div className="flex gap-[10.500px]">
                  {['선택1', '선택2', '선택3', '선택4', '선택5'].map((l) => <Spin key={l} label={l} />)}
                </div>
              </div>
              <div className="flex items-center ml-[8px] mt-[6px] h-[21px]">
                <span className="w-[40px] font-bold text-[14.500px] text-[#222] whitespace-nowrap">조회 :</span>
                <div className="flex gap-[11.500px] h-full"><EmptyBox /><EmptyBox /><EmptyBox /><EmptyBox /><EmptyBox /></div>
              </div>
              <div className="flex items-center ml-[8px] mt-[5px] h-[22px]">
                <span className="w-[40px] font-bold text-[14.500px] text-[#222] whitespace-nowrap">비율 :</span>
                <div className="flex gap-[11.500px] h-full"><EmptyBox /><EmptyBox /><EmptyBox /><EmptyBox /><EmptyBox /></div>
              </div>
              <div className="flex ml-[6px] mt-[10px] items-start">
                <Group label="조합 범위설정" className="w-[281px] h-[133px] flex pl-[4px] pt-[3px]">
                  <div className="w-[112px] pt-[10px]">
                    <RangeRow label="종합" from="160" to="170" />
                    <RangeRow label="주기" from="30" to="40" className="mt-[4px]" />
                    <RangeRow label="델타" from="29" to="34" className="mt-[4px]" />
                    <div className="flex items-center mt-[13px] h-[21px]">
                      <span className="w-[47px] text-[11px] text-[#666]">조합시도</span>
                      <Sunken value="0" className="w-[38px] h-full bg-[#ccffff]" />
                    </div>
                  </div>
                  <div className="ml-[13px] flex flex-col">
                    <div className="h-[19px] flex items-center gap-[3px]"><Check on /><span className={red}>당첨번호 중복금지</span></div>
                    <div className="h-[19px] flex items-center text-[11px] text-[#666]">
                      <Check /><span className="ml-[3px] w-[39px]">제외수</span><Check /><span className="ml-[3px]">주기지정</span>
                    </div>
                    <div className="h-[20px] flex items-center text-[11px] text-[#666]">
                      <Check /><span className="ml-[3px] w-[57px] whitespace-nowrap">번호대제외</span>
                      <span className="w-[42px]">번호대</span>
                      <Combo value="0" className="w-[33px]" />
                    </div>
                    <div className="h-[22px] flex items-center">
                      <Check on /><span className={`ml-[3px] w-[48px] ${red}`}>UDF패턴</span>
                      <Combo value="18주부" text="text-[#e0405f]" className="w-[46px]" />
                      <Combo value="3" className="w-[33px] ml-[5px]" />
                    </div>
                    <div className="h-[21px] flex items-center">
                      <Check on /><span className={`ml-[3px] w-[67px] whitespace-nowrap ${red}`}>VN2 패턴적용</span>
                      <span className={`w-[32px] pl-[8px] ${red}`}>중복</span>
                      <Combo value="0" className="w-[33px]" />
                    </div>
                    <div className="h-[22px] flex items-center">
                      <span className={`w-[35px] ${red}`}>패턴풀</span>
                      <Combo value="5" className="w-[31px]" />
                      <span className={`ml-[22px] w-[24px] ${red}`}>이월</span>
                      <Combo value="1" className="w-[33px]" />
                    </div>
                  </div>
                </Group>
                <Group label="패턴중복" className="w-[65px] h-[119px] ml-[10px] mt-[8px] px-[3px] pt-[9px]">
                  <Btn size="text-[9.500px]" className="h-[20px] w-[57px] font-bold">패턴대 번호</Btn>
                  <Btn size="text-[9.500px]" className="h-[19px] w-[57px] mt-[7px] text-[#777]">비너스 2기</Btn>
                  <Btn size="text-[9.500px]" className="h-[20px] w-[57px] text-[#777]">비너스 1기</Btn>
                  <Btn size="text-[9.500px]" className="h-[20px] w-[57px] text-[#777]">비너스 전체</Btn>
                  <Btn size="text-[9.500px]" className="h-[19px] w-[57px] font-bold text-[#d81f3c]">회차리셋</Btn>
                </Group>
              </div>
            </div>
            {/* right side */}
            <div className="w-[151px]">
              <div className="flex">
                <div className="w-[52px] pt-[8px]">
                  <svg className="ml-[9px]" width="28" height="24" viewBox="0 0 28 24">
                    <rect width="28" height="13" fill="#8fd0bc" />
                    <rect y="10" width="28" height="8" fill="#9a9a9a" />
                    <path d="M6 2l6 3 5 0-1 3 5 1 4 3-6-1-2 6h-4L9 9 4 8l4-1z" fill="#26262b" />
                    <path d="M1 10l7 5-4 3z" fill="#3e4a52" />
                    <rect y="17" width="28" height="7" fill="#ea8a80" />
                    <path d="M6 20.500h16" stroke="#f6d0c8" strokeDasharray="2 1" />
                  </svg>
                  <div className="mt-[10px] h-[22px] bg-[#ffffcc] border border-[#f0b8a0]" />
                  <div className="h-[20px] flex items-center justify-center text-[12px] text-[#666]">합계</div>
                  <Btn className="mt-[12px] ml-[3px] w-[49px] h-[20px] text-[#666]">주기분포</Btn>
                  <Btn className="mt-[7px] ml-[3px] w-[49px] h-[20px] text-[#888]">결수분석</Btn>
                  <Btn className="mt-[6px] ml-[3px] w-[49px] h-[20px] font-bold text-[#3b1fa0]">파일저장</Btn>
                </div>
                <Group label="옵션" legendBg="bg-[#f0f0f0]" className="w-[72px] h-[172px] ml-[17px] mt-[8px] bg-[#f0f0f0] pl-[9px] pt-[14px] text-[11px] text-[#666]">
                  <div className="w-[56px] flex flex-col">
                    <div className="h-[13px] flex items-center justify-between"><span>번호전체</span><Check on /></div>
                    <div className="h-[13px] flex items-center justify-between"><span>홀짝분석</span><Check on /></div>
                    <div className="h-[13px] flex items-center justify-between"><span>덮어쓰기</span><Check /></div>
                    <div className="h-[13px] flex items-center"><span>분석레벨</span></div>
                    <Combo value="2" height="h-[16px]" className="mt-[6px] w-[58px]" />
                    <div className="mt-[13px] h-[26px] flex items-center justify-between leading-[13px]"><span className="whitespace-nowrap text-[10.500px]">다음번호<br />조회/분석</span><Check /></div>
                    <div className="h-[13px] flex items-center justify-between text-[#7a2a8a]"><span>패턴적용</span><Check on /></div>
                    <div className="h-[26px] flex items-center justify-between leading-[13px] text-[#7a2a8a]"><span className="whitespace-nowrap text-[10.500px]">다음패턴<br />조회/분석</span><Check /></div>
                  </div>
                </Group>
              </div>
              <Group label="당첨번호" className="w-[137px] h-[53px] mt-[11px] ml-[4px] pt-[7px] pl-[2px]">
                <div className="h-[15px] flex items-center text-[10px] text-[#666] pl-[9px]">
                  <Radio on /><span className="ml-[2px] w-[48px]">사이트</span>
                  <Radio /><span className="ml-[2px] whitespace-nowrap">PC 역셀파일</span>
                </div>
                <div className="flex gap-[7px] mt-[3px]">
                  <Btn className="w-[62px] h-[21px] font-bold text-[#333]">당첨번호</Btn>
                  <Btn className="w-[62px] h-[21px] font-bold text-[#333]">로그인</Btn>
                </div>
              </Group>
              <div className="mt-[3px] ml-[3px] w-[139px] h-[19px] bg-[#ffffcc] flex items-center justify-center text-[11px] font-bold text-[#1a2a8a]">Ready... OK!</div>
            </div>
          </div>
          <Group label="실행" className="mt-[9px] ml-[9px] w-[504px] h-[40px] flex items-start pl-[3px] pt-[7px]">
            <Btn size="text-[12px]" className="w-[52px] h-[24px] font-bold">자료지움</Btn>
            <Btn size="text-[12px]" className="w-[55px] h-[24px] ml-[8px] font-bold text-[#444]">번호조회</Btn>
            <Btn size="text-[12px]" className="w-[54px] h-[24px] ml-[7px] font-bold text-[#444]">번호분석</Btn>
            <Btn size="text-[12px]" className="w-[55px] h-[24px] ml-[11px] font-bold text-[#7a1a8a]">패턴조회</Btn>
            <Btn size="text-[12px]" className="w-[57px] h-[24px] ml-[7px] font-bold text-[#7a1a8a]">패턴분석</Btn>
            <Btn size="text-[12px]" className="w-[54px] h-[24px] ml-[7px] font-bold text-[#444]">번호조합</Btn>
            <Btn size="text-[12px]" className="w-[55px] h-[24px] ml-[8px] font-bold text-[#2a2ab0]">시뮬|차트</Btn>
            <Btn size="text-[12px]" className="w-[55px] h-[24px] ml-[9px] font-bold text-[#333]">닫기</Btn>
          </Group>
        </div>
        <div className="w-[6px] bg-[#e9ecef]" />
        <div className="flex-1" />
      </div>
    </div>
  );
}

export default function App() {
  return (
    <div className="relative w-[1280px] h-[720px] overflow-hidden bg-black font-['Noto_Sans','Noto_Sans_CJK_KR',sans-serif]">
      <div className="h-[12px]" />
      <div className="h-[696px] flex flex-col bg-white">
        <TitleBar />
        <TabStrip />
        <Ribbon />
        <FormulaBar />
        <ColHeader />
        <div className="flex-1 min-h-0 flex">
          <div className="flex-1 min-w-0 flex flex-col">
            <Sheet />
            <TabBar />
          </div>
          <VScroll />
        </div>
        <StatusBar />
      </div>
      <Dialog />
    </div>
  );
}
